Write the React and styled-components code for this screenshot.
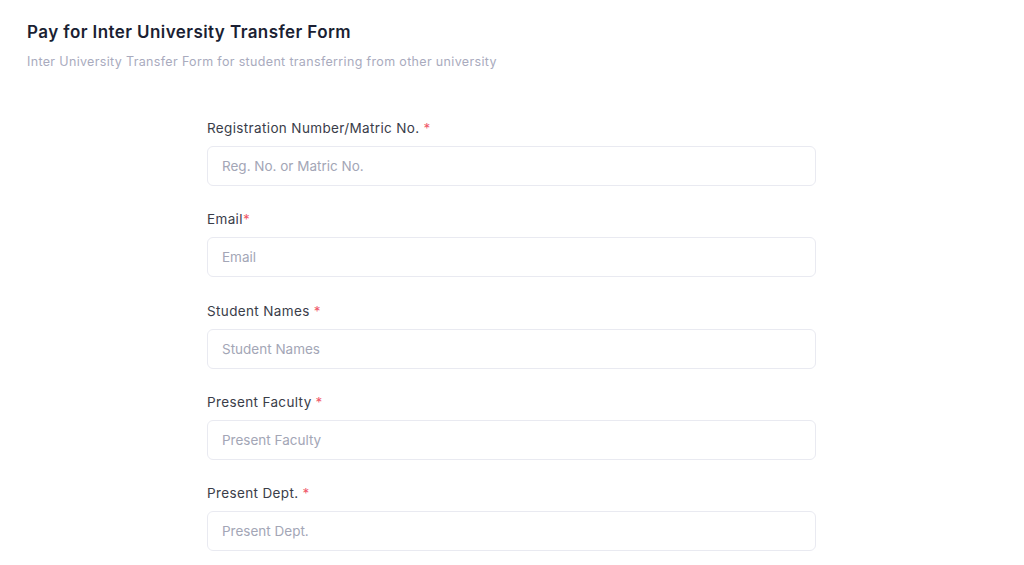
import React from "react";
import styled, { createGlobalStyle } from "styled-components";

const GlobalStyle = createGlobalStyle`
  body {
    margin: 0;
    background: #ffffff;
    font-family: "Inter", "Noto Sans", sans-serif;
  }
  * {
    box-sizing: border-box;
  }
`;

const fields = [
  { label: "Registration Number/Matric No.", placeholder: "Reg. No. or Matric No.", spaced: true },
  { label: "Email", placeholder: "Email", spaced: false },
  { label: "Student Names", placeholder: "Student Names", spaced: true },
  { label: "Present Faculty", placeholder: "Present Faculty", spaced: true },
  { label: "Present Dept.", placeholder: "Present Dept.", spaced: true },
];

const App = () => {
  return (
    <Page>
      <GlobalStyle />
      <Header>
        <Title>Pay for Inter University Transfer Form</Title>
        <Subtitle>
          Inter University Transfer Form for student transferring from other university
        </Subtitle>
      </Header>
      <Form onSubmit={(e) => e.preventDefault()}>
        {fields.map((field) => (
          <Field key={field.label}>
            <Label>
              {field.label}
              <Required spaced={field.spaced}>*</Required>
            </Label>
            <Input type="text" placeholder={field.placeholder} />
          </Field>
        ))}
      </Form>
    </Page>
  );
};

const Page = styled.div`
  min-height: 565px;
  padding: 21px 27px 0;
`;

const Header = styled.header`
  display: flex;
  flex-direction: column;
  gap: 10px;
`;

const Title = styled.h1`
  margin: 0;
  font-size: 17px;
  line-height: 22px;
  font-weight: 600;
  letter-spacing: 0.42px;
  color: #1b1f33;
`;

const Subtitle = styled.p`
  margin: 0;
  font-size: 12.5px;
  line-height: 18px;
  letter-spacing: 0.34px;
  color: #a9abbe;
`;

const Form = styled.form`
  width: 609px;
  margin: 47px 0 0 180px;
  display: flex;
  flex-direction: column;
  gap: 23.25px;
`;

const Field = styled.div`
  display: flex;
  flex-direction: column;
  gap: 8px;
`;

const Label = styled.label`
  font-size: 13.5px;
  line-height: 20px;
  letter-spacing: 0.36px;
  color: #3a3d49;
`;

const Required = styled.span`
  color: #ef5a6a;
  margin-left: ${({ spaced }) => (spaced ? "4px" : "0")};
`;

const Input = styled.input`
  height: 40px;
  width: 100%;
  padding: 0 14px;
  border: 1px solid #e9eaf1;
  border-radius: 6px;
  background: #ffffff;
  font-family: inherit;
  font-size: 13.5px;
  color: #3d404c;
  outline: none;

  &::placeholder {
    color: #a3a6b6;
  }
`;

export default App;
